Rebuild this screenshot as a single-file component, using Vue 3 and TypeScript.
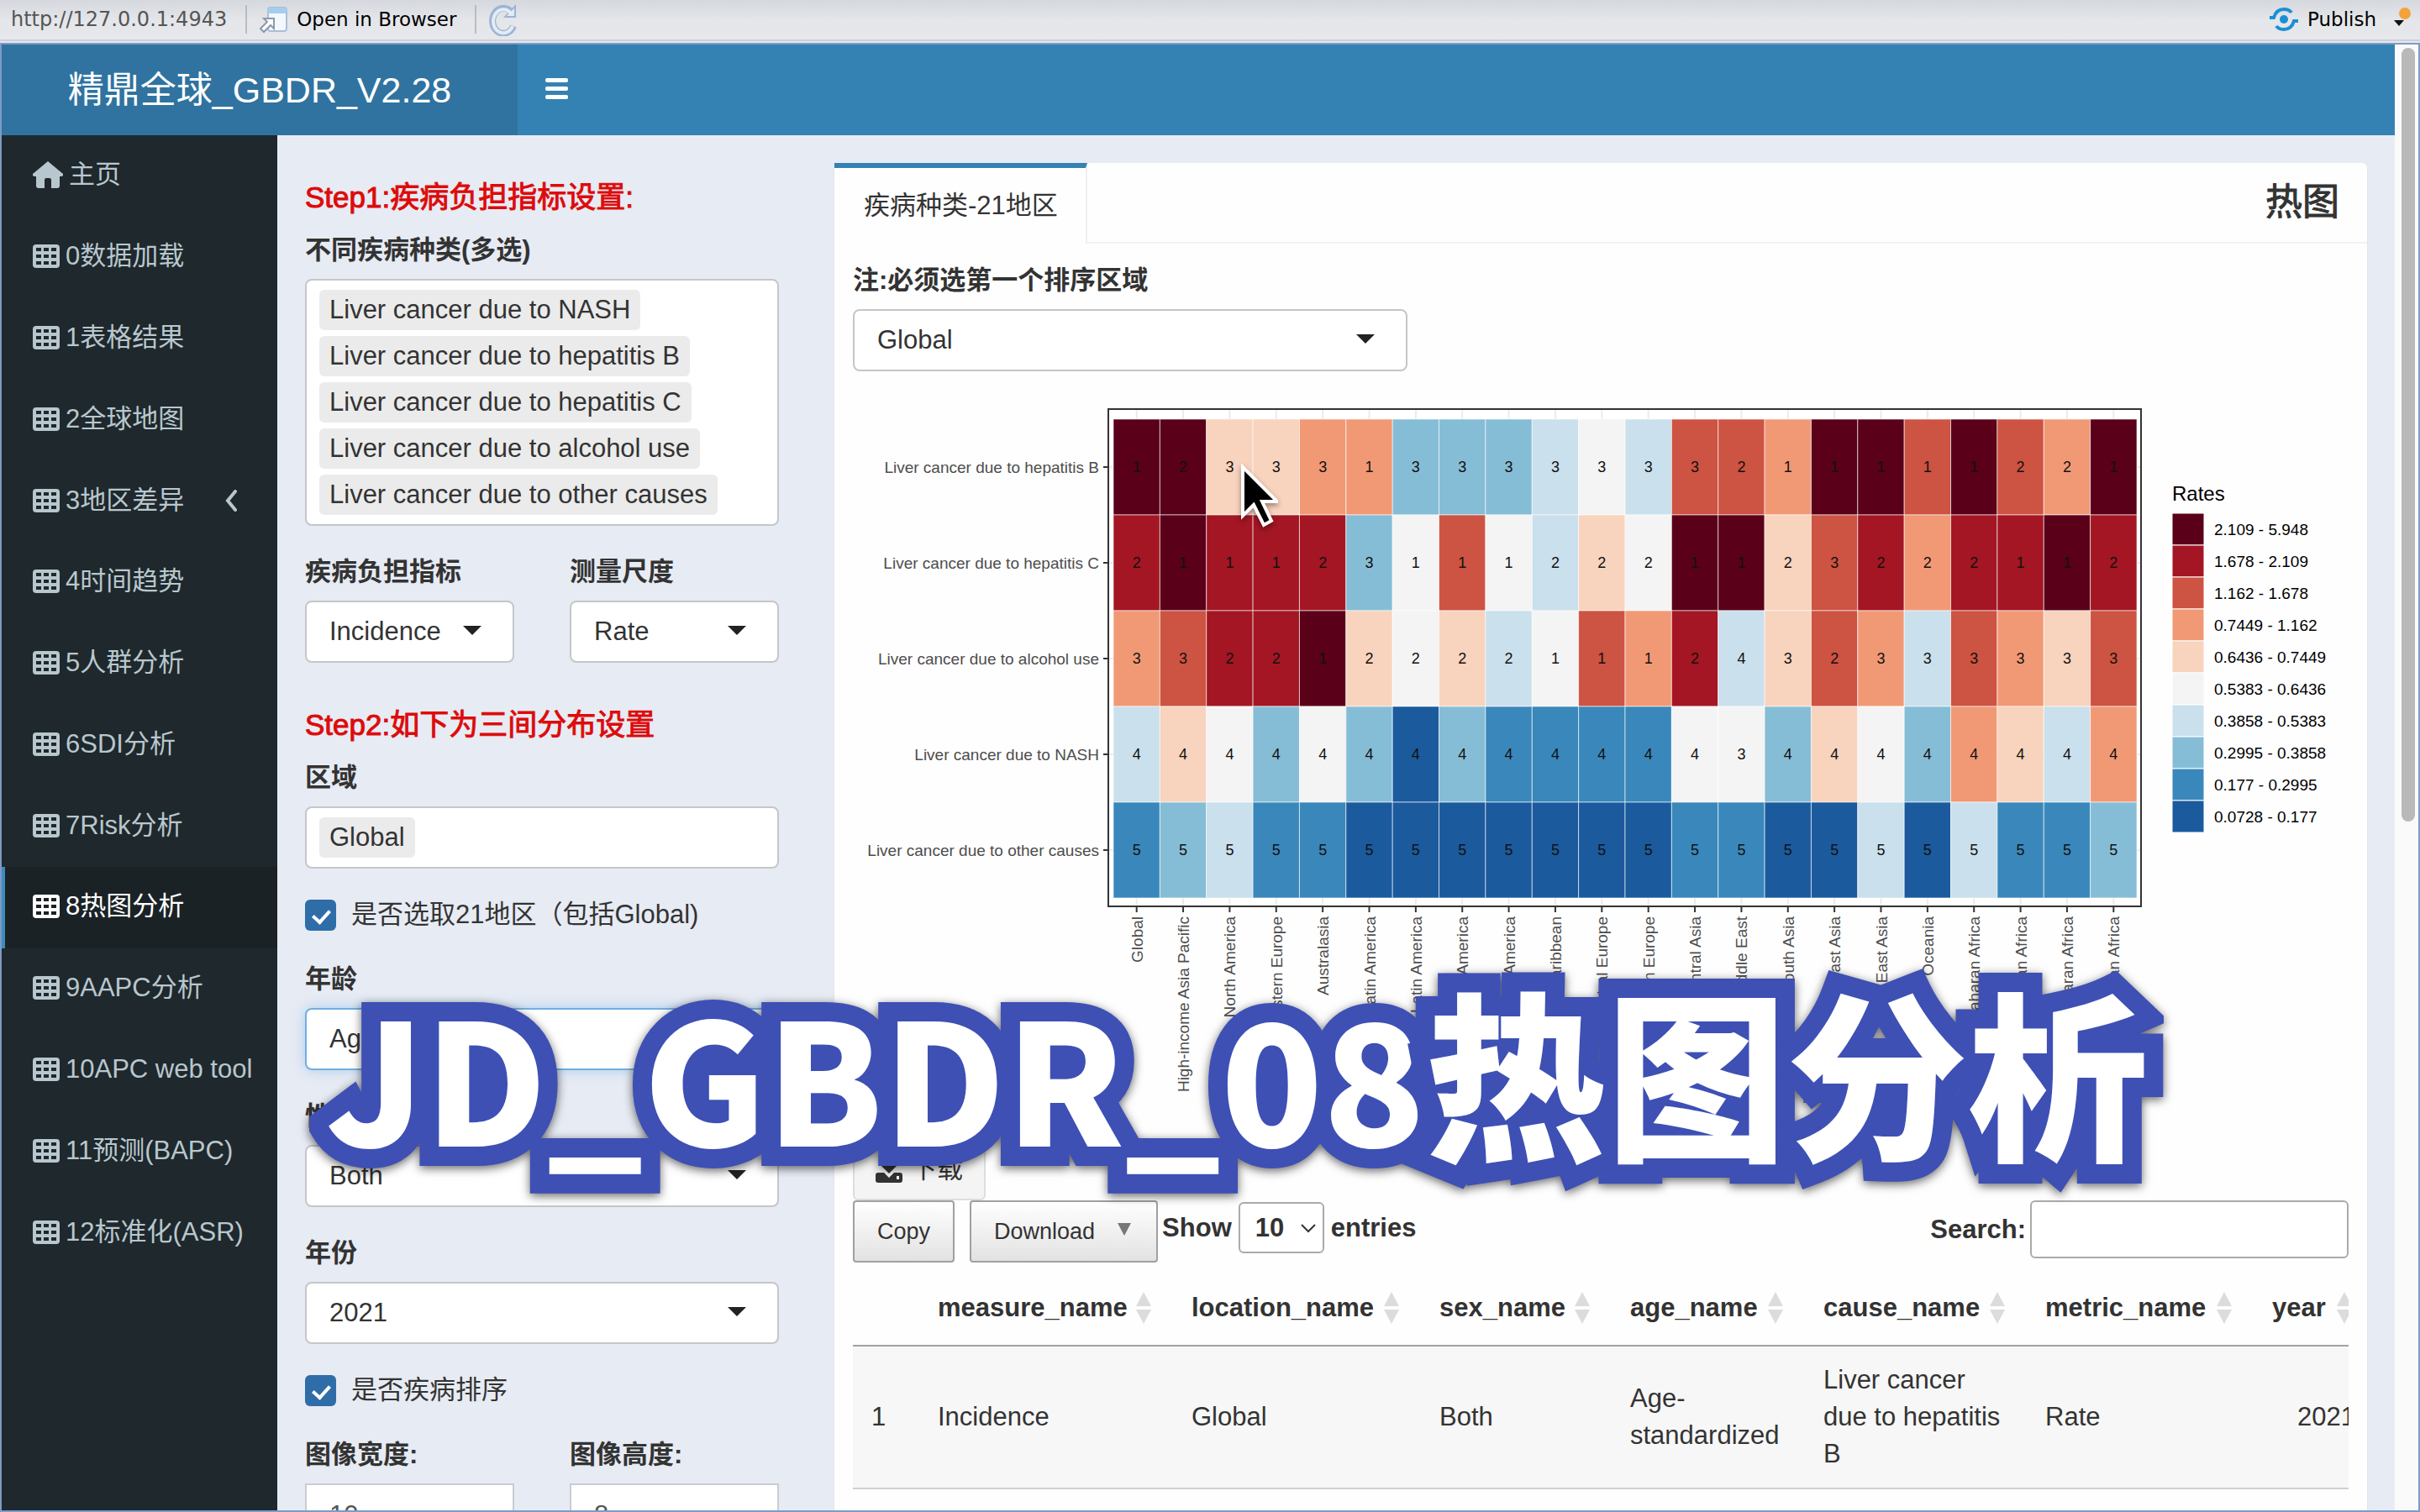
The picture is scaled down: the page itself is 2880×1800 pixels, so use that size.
<script setup lang="ts">
import { ref } from 'vue'

const menu = [
  '主页', '0数据加载', '1表格结果', '2全球地图', '3地区差异', '4时间趋势', '5人群分析',
  '6SDI分析', '7Risk分析', '8热图分析', '9AAPC分析', '10APC web tool', '11预测(BAPC)', '12标准化(ASR)',
]
const active = 9

const causes = [
  'Liver cancer due to NASH',
  'Liver cancer due to hepatitis B',
  'Liver cancer due to hepatitis C',
  'Liver cancer due to alcohol use',
  'Liver cancer due to other causes',
]

const all21 = ref(true)
const sorted = ref(true)
const plotWidth = ref('10')
const plotHeight = ref('8')

const palette: Record<string, string> = {
  D: '#5a0019', R: '#a41623', O: '#cd5342', S: '#f19975', P: '#f8d3bd',
  W: '#f4f4f4', L: '#cae0ec', M: '#86bdd6', B: '#3a88bb', N: '#1c5a9e',
}
const legend = [
  ['D', '2.109 - 5.948'], ['R', '1.678 - 2.109'], ['O', '1.162 - 1.678'], ['S', '0.7449 - 1.162'],
  ['P', '0.6436 - 0.7449'], ['W', '0.5383 - 0.6436'], ['L', '0.3858 - 0.5383'], ['M', '0.2995 - 0.3858'],
  ['B', '0.177 - 0.2995'], ['N', '0.0728 - 0.177'],
]
const heat = [
  { name: 'Liver cancer due to hepatitis B', bins: 'DDPPSSMMMLWLOOSDDODOSD', ranks: '1233313333333211111221' },
  { name: 'Liver cancer due to hepatitis C', bins: 'RDRRRMWOWLPWDDPORSRRDR', ranks: '2111231112221123222112' },
  { name: 'Liver cancer due to alcohol use', bins: 'SORRDPWPLWOSRLPOSLOSPO', ranks: '3322122221112432333333' },
  { name: 'Liver cancer due to NASH', bins: 'LPWMWMNMBBBBWWMPWMSPLS', ranks: '4444444444444344444444' },
  { name: 'Liver cancer due to other causes', bins: 'BMLBBNNNNNNNBBNNLNLBBM', ranks: '5555555555555555555555' },
]
const regions = [
  'Global', 'High-income Asia Pacific', 'High-income North America', 'Western Europe', 'Australasia',
  'Andean Latin America', 'Tropical Latin America', 'Southern Latin America', 'Central Latin America',
  'Caribbean', 'Central Europe', 'Eastern Europe', 'Central Asia', 'North Africa and Middle East',
  'South Asia', 'Southeast Asia', 'East Asia', 'Oceania', 'Central Sub-Saharan Africa',
  'Eastern Sub-Saharan Africa', 'Southern Sub-Saharan Africa', 'Western Sub-Saharan Africa',
]

// Plot geometry, in the units of the chart's viewBox
const left = 310
const top = 24
const stepX = 1218 / 22
const stepY = 114
const cx = (i: number) => left + stepX * (i + 0.5)
const cy = (i: number) => top + stepY * (i + 0.5)

const columns = ['measure_name', 'location_name', 'sex_name', 'age_name', 'cause_name', 'metric_name', 'year']
const row = ['Incidence', 'Global', 'Both', 'Age-standardized', 'Liver cancer due to hepatitis B', 'Rate', '2021']
</script>

<template>
  <div class="viewer">
    <div class="toolbar">
      <span class="address">http://127.0.0.1:4943</span>
      <i class="rule"></i>
      <button class="tool">
        <svg width="34" height="34" viewBox="0 0 34 34">
          <rect x="10" y="3" width="22" height="28" rx="3" fill="#f4f8fc" stroke="#a9bfd8" stroke-width="2" />
          <path d="M10 10V6q0-3 3-3h16q3 0 3 3v4z" fill="#a5cdee" />
          <path d="M1 28l8-8-4-4h12v12l-4-4-8 8z" fill="#fff" stroke="#8b99aa" stroke-width="2" />
        </svg>
        Open in Browser
      </button>
      <i class="rule"></i>
      <button class="tool" aria-label="Refresh">
        <svg width="34" height="40" viewBox="0 0 34 40">
          <path d="M27 12A13 15 0 1 0 29 28" fill="none" stroke="#9db4d3" stroke-width="8" />
          <path d="M32 2v16H17z" fill="#9db4d3" />
          <path d="M26 13A12 14 0 1 0 28 28" fill="none" stroke="#e3ebf5" stroke-width="4" />
          <path d="M30 7v9h-9z" fill="#e3ebf5" />
        </svg>
      </button>
      <button class="tool publish">
        <svg width="36" height="28" viewBox="0 0 36 28">
          <circle cx="18" cy="14" r="5" fill="#1b8fd6" />
          <path d="M1 12h5C8 5 13 2 18 2c4 0 7 1 9 4" fill="none" stroke="#1b8fd6" stroke-width="4" />
          <path d="M35 16h-5c-2 7-7 10-12 10-4 0-7-1-9-4" fill="none" stroke="#1b8fd6" stroke-width="4" />
        </svg>
        Publish
      </button>
      <svg class="more" width="22" height="40" viewBox="0 0 22 40">
        <circle cx="14" cy="13" r="7" fill="#f3a23c" />
        <path d="M1 21h12l-6 7z" fill="#111" />
      </svg>
    </div>

    <div class="frame">
      <div class="page">
        <header class="navbar">
          <a class="logo" href="#">精鼎全球_GBDR_V2.28</a>
          <button class="burger" aria-label="Toggle navigation"><i></i><i></i><i></i></button>
        </header>

        <div class="body">
          <nav class="sidebar">
            <div class="menu">
              <a v-for="(item, i) in menu" :key="item" href="#" :class="{ active: i === active }">
                <svg v-if="i === 0" width="36" height="32" viewBox="0 0 36 32">
                  <path d="M18 0L0 15q-1 3 3 3h1v11q0 3 3 3h7V22q0-2 2-2h4q2 0 2 2v10h7q3 0 3-3V18h1q4 0 3-3z" fill="currentColor" />
                </svg>
                <svg v-else width="32" height="28" viewBox="0 0 32 28">
                  <path fill="currentColor" fill-rule="evenodd" d="M4 0h24q4 0 4 4v20q0 4-4 4H4q-4 0-4-4V4q0-4 4-4zM4 4v4h6V4zM13 4v4h6V4zM22 4v4h6V4zM4 12v4h6v-4zM13 12v4h6v-4zM22 12v4h6v-4zM4 20v4h6v-4zM13 20v4h6v-4zM22 20v4h6v-4z" />
                </svg>
                <span>{{ item }}</span>
                <svg v-if="i === 4" class="caret" width="14" height="26" viewBox="0 0 14 26">
                  <path d="M12 2L3 13l9 11" fill="none" stroke="currentColor" stroke-width="4" stroke-linecap="round" />
                </svg>
              </a>
            </div>
          </nav>

          <main class="content">
            <form class="settings">
              <h4>Step1:疾病负担指标设置:</h4>
              <div class="group">
                <label for="causes">不同疾病种类(多选)</label>
                <div id="causes" class="chips" tabindex="0">
                  <span v-for="c in causes" :key="c">{{ c }}</span>
                </div>
              </div>
              <div class="pair">
                <div class="group">
                  <label for="measure">疾病负担指标</label>
                  <div class="select"><select id="measure"><option>Incidence</option></select></div>
                </div>
                <div class="group">
                  <label for="metric">测量尺度</label>
                  <div class="select"><select id="metric"><option>Rate</option></select></div>
                </div>
              </div>
              <h4>Step2:如下为三间分布设置</h4>
              <div class="group">
                <label for="region">区域</label>
                <div id="region" class="chips" tabindex="0"><span>Global</span></div>
              </div>
              <label class="check"><input v-model="all21" type="checkbox" />是否选取21地区（包括Global)</label>
              <div class="group">
                <label for="age">年龄</label>
                <div class="select focus"><select id="age"><option>Age-standardized</option></select></div>
              </div>
              <div class="group">
                <label for="sex">性别</label>
                <div class="select"><select id="sex"><option>Both</option></select></div>
              </div>
              <div class="group">
                <label for="year">年份</label>
                <div class="select"><select id="year"><option>2021</option></select></div>
              </div>
              <label class="check"><input v-model="sorted" type="checkbox" />是否疾病排序</label>
              <div class="pair">
                <div class="group">
                  <label for="pw">图像宽度:</label>
                  <input id="pw" v-model="plotWidth" class="number" type="text" />
                </div>
                <div class="group">
                  <label for="ph">图像高度:</label>
                  <input id="ph" v-model="plotHeight" class="number" type="text" />
                </div>
              </div>
            </form>

            <section class="results">
              <div class="tabs">
                <a href="#" class="tab">疾病种类-21地区</a>
                <h3>热图</h3>
              </div>
              <div class="pane">
                <div class="group sort">
                  <label for="first">注:必须选第一个排序区域</label>
                  <div class="select"><select id="first"><option>Global</option></select></div>
                </div>

                <svg class="plot" viewBox="0 0 1780 880">
                  <rect x="304" y="12" width="1229" height="592" fill="#fff" />
                  <g stroke="#ebebeb" stroke-width="2">
                    <line v-for="(r, i) in regions" :key="i" :x1="cx(i)" :x2="cx(i)" y1="13" y2="603" />
                    <line v-for="(h, i) in heat" :key="h.name" x1="305" x2="1532" :y1="cy(i)" :y2="cy(i)" />
                  </g>
                  <g v-for="(h, j) in heat" :key="h.name">
                    <rect
                      v-for="(b, i) in h.bins" :key="i" :x="left + stepX * i" :y="top + stepY * j"
                      :width="stepX" :height="stepY" :fill="palette[b]" stroke="#fff" stroke-opacity="0.6"
                    />
                    <text
                      v-for="(n, i) in h.ranks" :key="i" class="rank" :x="cx(i)" :y="cy(j) + 6"
                    >{{ n }}</text>
                    <text class="axis" x="293" :y="cy(j) + 7">{{ h.name }}</text>
                    <line x1="298" x2="304" :y1="cy(j)" :y2="cy(j)" stroke="#333" stroke-width="2" />
                  </g>
                  <rect x="304" y="12" width="1229" height="592" fill="none" stroke="#333" stroke-width="2" />
                  <g v-for="(r, i) in regions" :key="i">
                    <line :x1="cx(i)" :x2="cx(i)" y1="604" y2="611" stroke="#333" stroke-width="2" />
                    <text class="axis" :transform="`translate(${cx(i) + 7} 616) rotate(-90)`">{{ r }}</text>
                  </g>
                  <text class="legend-title" x="1570" y="121">Rates</text>
                  <g v-for="([bin, range], i) in legend" :key="bin">
                    <rect x="1570" :y="136 + 38 * i" width="38" height="38" :fill="palette[bin]" stroke="#fff" />
                    <text class="legend-label" x="1620" :y="162 + 38 * i">{{ range }}</text>
                  </g>
                </svg>

                <button class="save">
                  <svg width="32" height="32" viewBox="0 0 32 32">
                    <path fill="currentColor" fill-rule="evenodd" d="M13 0h6v11h7L16 21 6 11h7zM3 20h7l6 6 6-6h7q3 0 3 3v6q0 3-3 3H3q-3 0-3-3v-6q0-3 3-3zM25 24v4h3v-4z" />
                  </svg>
                  下载
                </button>

                <div class="controls">
                  <button class="dt">Copy</button>
                  <button class="dt">Download <i></i></button>
                  <label class="length">
                    Show
                    <span class="count">
                      <select><option>10</option></select>
                      <svg width="18" height="12" viewBox="0 0 18 12"><path d="M1 2l8 8 8-8" fill="none" stroke="#333" stroke-width="2" /></svg>
                    </span>
                    entries
                  </label>
                  <label class="search">Search:<input type="search" /></label>
                </div>

                <div class="scroll">
                  <table>
                    <colgroup>
                      <col class="w0" /><col class="w1" /><col class="w2" /><col class="w3" /><col class="w4" /><col class="w5" /><col class="w6" /><col class="w7" />
                    </colgroup>
                    <thead>
                      <tr>
                        <th></th>
                        <th v-for="c in columns" :key="c">
                          <div>
                            {{ c }}
                            <svg width="18" height="38" viewBox="0 0 18 38"><path d="M9 0l9 17H0zM0 21h18L9 38z" fill="#dcdcdc" /></svg>
                          </div>
                        </th>
                      </tr>
                    </thead>
                    <tbody>
                      <tr>
                        <td>1</td>
                        <td v-for="v in row" :key="v">{{ v }}</td>
                      </tr>
                    </tbody>
                  </table>
                </div>
              </div>
            </section>
          </main>
        </div>
      </div>
      <div class="track"><div class="thumb"></div></div>
    </div>

    <svg class="pointer" width="46" height="76" viewBox="0 0 46 76">
      <path d="M4 4v58l13-13 12 24 9-5-11-23h18z" fill="#000" stroke="#fff" stroke-width="4" />
    </svg>
    <div class="caption"><span>JD_GBDR_08</span>热图分析</div>
  </div>
</template>

<style>
body {
  margin: 0;
  overflow: hidden;
}
</style>

<style scoped>
.viewer, .viewer * {
  box-sizing: border-box;
}
.viewer {
  position: relative;
  display: flex;
  flex-direction: column;
  height: 100vh;
  overflow: hidden;
  font: 31px/44px "Liberation Sans", "Noto Sans CJK SC", sans-serif;
  color: #333;
}
button, input, select {
  font: inherit;
  color: inherit;
  margin: 0;
}
a {
  color: inherit;
  text-decoration: none;
}
svg {
  flex: none;
}

.toolbar {
  display: flex;
  align-items: center;
  flex: none;
  height: 51px;
  padding: 0 10px 4px 13px;
  background: linear-gradient(#d5d8dd, #e4e6ea 50%, #e7e8ec);
  border-bottom: 2px solid #e7e8ee;
  box-shadow: inset 0 -2px #cdd0d6;
  font: 24px/40px "DejaVu Sans", sans-serif;
  color: #555;
}
.rule {
  width: 2px;
  height: 34px;
  margin: 0 15px 0 22px;
  background: #b9bcc2;
}
.tool {
  display: flex;
  align-items: center;
  gap: 10px;
  padding: 0;
  border: 0;
  background: none;
  font-size: 23px;
  color: #000;
}
.publish {
  margin-left: auto;
}
.more {
  margin-left: 20px;
}

.frame {
  display: flex;
  flex: 1;
  min-height: 0;
  border: 2px solid #7f9ac6;
}
.page {
  display: flex;
  flex-direction: column;
  flex: 1;
  min-width: 0;
}
.track {
  width: 28px;
  padding: 4px 4px 4px 8px;
  background: #fafafa;
}
.thumb {
  height: 53%;
  border-radius: 8px;
  background: #b9b9b9;
}
.navbar {
  display: flex;
  flex: none;
  height: 108px;
  background: #3482b3;
  color: #fff;
}
.logo {
  width: 614px;
  text-align: center;
  font-size: 43px;
  line-height: 109px;
  background: #3073a0;
}
.burger {
  display: flex;
  flex-direction: column;
  justify-content: center;
  gap: 5px;
  padding: 0 33px 4px;
  border: 0;
  background: none;
}
.burger i {
  width: 27px;
  height: 5px;
  border-radius: 2px;
  background: #fff;
}
.body {
  display: flex;
  flex: 1;
  min-height: 0;
}

.sidebar {
  flex: none;
  width: 328px;
  background: #1f282c;
  color: #b8c7ce;
}
.menu {
  display: grid;
  grid-auto-rows: 1fr;
  height: 1355px;
}
.menu a {
  display: flex;
  align-items: center;
  gap: 7px;
  padding: 0 20px 2px 33px;
  border-left: 4px solid transparent;
  white-space: nowrap;
}
.menu .active {
  border-color: #3c8dbc;
  background: #1b2226;
  color: #fff;
}
.caret {
  margin-left: auto;
  margin-right: 28px;
}

.content {
  display: flex;
  flex: 1;
  min-width: 0;
  overflow: hidden;
  background: #e7ebf3;
}
.settings {
  flex: none;
  width: 25%;
  padding: 54px 33px 0;
}
h4 {
  margin: 0 0 22px;
  font-size: 35px;
  line-height: 39px;
  font-weight: 400;
  color: #dd0b0b;
  -webkit-text-stroke: 1px #dd0b0b;
}
.pair + h4 {
  margin-top: 54px;
}
.group {
  margin-bottom: 33px;
}
.group > label {
  display: block;
  margin-bottom: 12px;
  font-weight: 700;
}
.chips {
  display: flex;
  flex-direction: column;
  align-items: flex-start;
  gap: 7px;
  padding: 11px 15px;
  border: 2px solid #c4c6ca;
  border-radius: 8px;
  background: #fff;
}
.chips span {
  padding: 2px 12px;
  border-radius: 6px;
  background: #ebebeb;
}
.pair {
  display: grid;
  grid-template-columns: 1fr 1fr;
  gap: 66px;
}
.pair .group {
  min-width: 0;
}
.pair:not(:last-child) .group {
  margin-bottom: 0;
}
.select {
  position: relative;
}
.select select {
  display: block;
  width: 100%;
  height: 74px;
  padding: 0 27px;
  border: 2px solid #c4c6ca;
  border-radius: 8px;
  background: #fff;
  appearance: none;
}
.select::after {
  content: "";
  position: absolute;
  right: 39px;
  top: 30px;
  border: 11px solid transparent;
  border-top-color: #222;
  border-bottom: 0;
}
.focus select {
  border-color: #74aede;
  box-shadow: 0 0 16px #a9cdee;
}
.check {
  display: flex;
  align-items: center;
  gap: 18px;
  margin-bottom: 33px;
  white-space: nowrap;
}
.check input {
  flex: none;
  appearance: none;
  width: 37px;
  height: 37px;
  border-radius: 6px;
  background: #2e6da8;
  position: relative;
}
.check input:checked::after {
  content: "";
  position: absolute;
  left: 13px;
  top: 8px;
  width: 9px;
  height: 16px;
  border: solid #fff;
  border-width: 0 4px 4px 0;
  transform: rotate(42deg);
}
.number {
  display: block;
  width: 100%;
  height: 75px;
  padding: 0 27px;
  border: 2px solid #c9ccd2;
  background: #fff;
  color: #555;
}

.results {
  flex: 1;
  min-width: 0;
  margin: 33px 33px 0;
  border-radius: 6px 6px 0 0;
  background: #fefefe;
  box-shadow: 0 2px 2px rgba(0, 0, 0, 0.1);
}
.tabs {
  display: flex;
  justify-content: space-between;
  height: 96px;
  box-shadow: inset 0 -2px #f2f2f2;
}
.tab {
  padding: 23px 33px 0 35px;
  border-top: 6px solid #3482b3;
  border-right: 2px solid #f0f0f0;
  background: #fefefe;
}
h3 {
  margin: 0;
  padding: 25px 33px 0;
  font-size: 44px;
  font-weight: 400;
  -webkit-text-stroke: 1px #333;
}
.pane {
  padding: 22px;
}
.sort {
  width: 660px;
}
.plot {
  display: block;
  width: 100%;
}
.plot text {
  font-size: 19px;
  fill: #4d4d4d;
}
.plot .axis {
  text-anchor: end;
}
.plot .rank {
  font-size: 18px;
  text-anchor: middle;
  fill: #111;
}
.plot .legend-title {
  font-size: 24px;
  fill: #000;
}
.plot .legend-label {
  fill: #000;
}
.save {
  display: flex;
  align-items: center;
  gap: 10px;
  height: 74px;
  padding: 0 25px;
  border: 2px solid #ddd;
  border-radius: 6px;
  background: #f4f4f4;
}
.controls {
  display: flex;
  align-items: flex-start;
}
.dt {
  display: flex;
  align-items: center;
  height: 74px;
  margin-right: 18px;
  padding: 0 27px;
  border: 2px solid #a0a0a0;
  border-radius: 4px;
  background: linear-gradient(#fff, #e2e2e2);
  font-size: 27px;
  white-space: nowrap;
}
.dt i {
  margin: 0 3px 6px 27px;
  border: 8px solid transparent;
  border-top: 15px solid #777;
  border-bottom: 0;
}
.dt + .dt {
  margin-right: 5px;
}
.length, .search {
  display: flex;
  align-items: center;
  gap: 8px;
  height: 65px;
  font-weight: 700;
}
.count {
  position: relative;
  display: flex;
}
.count select {
  width: 102px;
  height: 61px;
  padding: 0 18px;
  border: 2px solid #aaa;
  border-radius: 6px;
  background: #fff;
  appearance: none;
}
.count svg {
  position: absolute;
  right: 10px;
  top: 25px;
}
.search {
  height: 69px;
  margin-left: auto;
  gap: 5px;
}
.search input {
  width: 379px;
  height: 69px;
  border: 2px solid #aaa;
  border-radius: 6px;
  background: #fff;
}
.scroll {
  margin-top: 10px;
  overflow: hidden;
}
table {
  table-layout: fixed;
  width: 1810px;
  border-collapse: collapse;
}
.w0 { width: 79px; }
.w1 { width: 302px; }
.w2 { width: 295px; }
.w3 { width: 227px; }
.w4 { width: 230px; }
.w5 { width: 264px; }
.w6 { width: 270px; }
.w7 { width: 143px; }
th {
  padding: 22px 26px 22px 22px;
  border-bottom: 2px solid #a3a3a3;
  text-align: left;
}
th div {
  display: flex;
  align-items: center;
  justify-content: space-between;
}
td {
  padding: 18px 22px;
  border-bottom: 2px solid #d0d0d0;
  background: #f7f7f7;
}
td:last-child {
  text-align: right;
}

.pointer {
  position: absolute;
  left: 1475px;
  top: 552px;
  filter: drop-shadow(0 3px 3px rgba(0, 0, 0, 0.4));
}
.caption {
  position: absolute;
  left: 388px;
  top: 1152px;
  font: 900 215px/240px "Noto Sans CJK SC", sans-serif;
  color: #fff;
  white-space: nowrap;
  -webkit-text-stroke: 46px #3e50b4;
  paint-order: stroke fill;
  filter: drop-shadow(0 3px 6px rgba(0, 0, 0, 0.6));
}
.caption span {
  font-size: 200px;
}
</style>
